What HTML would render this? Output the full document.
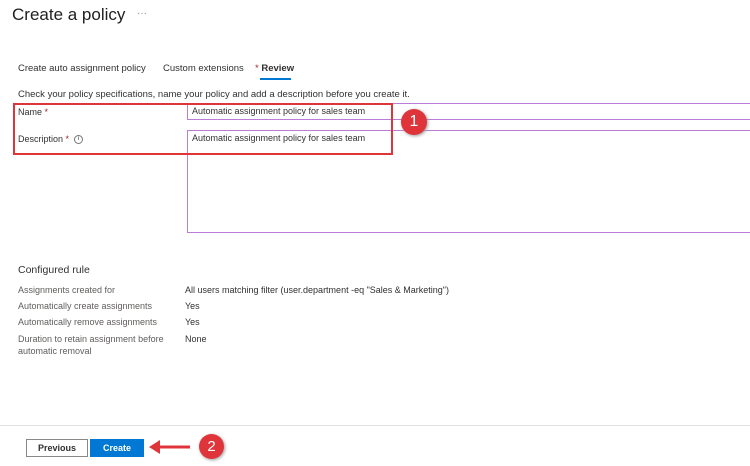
<!DOCTYPE html>
<html><head><style>
body{margin:0;width:750px;height:466px;background:#fff;font-family:"Liberation Sans",sans-serif;color:#323130;position:relative;overflow:hidden}
.a{position:absolute;white-space:nowrap}
.s{font-size:9.5px}
.g{color:#605e5c}
.req{color:#a4262c}
</style></head><body>
<div class="a" style="left:12px;top:5px;font-size:17px;color:#201f1e">Create a policy</div>
<div class="a" style="left:137px;top:8px;font-size:10px;color:#888">···</div>
<div class="a s" style="left:18px;top:63px">Create auto assignment policy</div>
<div class="a s" style="left:163px;top:63px">Custom extensions</div>
<div class="a s" style="left:255px;top:63px"><span class="req">*</span> <b style="font-weight:600">Review</b></div>
<div class="a" style="left:260px;top:78px;width:31px;height:2px;background:#0078d4"></div>
<div class="a s" style="left:18px;top:89px;font-size:9.5px">Check your policy specifications, name your policy and add a description before you create it.</div>
<div class="a" style="left:187px;top:103px;width:570px;height:15px;border:1px solid #b97fd6"></div>
<div class="a s" style="left:192px;top:106px;font-size:9px">Automatic assignment policy for sales team</div>
<div class="a s" style="left:18px;top:107px;font-size:9px">Name <span class="req">*</span></div>
<div class="a" style="left:187px;top:130px;width:570px;height:101px;border:1px solid #b97fd6"></div>
<div class="a s" style="left:192px;top:133px;font-size:9px">Automatic assignment policy for sales team</div>
<div class="a s" style="left:18px;top:134px;font-size:9px">Description <span class="req">*</span> &nbsp;<span style="display:inline-block;width:7px;height:7px;border:1px solid #777;border-radius:50%;font-size:6px;line-height:7px;text-align:center;vertical-align:middle">i</span></div>
<div class="a" style="left:13px;top:103px;width:376px;height:48px;border:2px solid #e0343b"></div>
<div class="a" style="left:401px;top:109px;width:26px;height:26px;border-radius:50%;background:#e0343b;color:#fff;font-size:16px;text-align:center;line-height:26px;box-shadow:1px 1px 3px #999">1</div>
<div class="a" style="left:18px;top:264px;font-size:10.5px">Configured rule</div>
<div class="a s g" style="left:18px;top:285px;font-size:9px">Assignments created for</div>
<div class="a s" style="left:185px;top:285px;font-size:9px">All users matching filter (user.department -eq "Sales &amp; Marketing")</div>
<div class="a s g" style="left:18px;top:301px;font-size:9px">Automatically create assignments</div>
<div class="a s" style="left:185px;top:301px;font-size:9px">Yes</div>
<div class="a s g" style="left:18px;top:317px;font-size:9px">Automatically remove assignments</div>
<div class="a s" style="left:185px;top:317px;font-size:9px">Yes</div>
<div class="a s g" style="left:18px;top:334px;font-size:9px;line-height:11.5px">Duration to retain assignment before<br>automatic removal</div>
<div class="a s" style="left:185px;top:334px;font-size:9px">None</div>
<div class="a" style="left:0;top:425px;width:750px;height:1px;background:#e1dfdd"></div>
<div class="a" style="left:26px;top:439px;width:60px;height:16px;border:1px solid #8a8886;font-size:9px;font-weight:bold;text-align:center;line-height:16px">Previous</div>
<div class="a" style="left:90px;top:439px;width:54px;height:18px;background:#0078d4;color:#fff;font-size:9px;font-weight:bold;text-align:center;line-height:18px">Create</div>
<svg class="a" style="left:146px;top:438px" width="46" height="20"><line x1="44" y1="9" x2="12" y2="9" stroke="#e0343b" stroke-width="3"/><polygon points="3,9 14,2 14,16" fill="#e0343b"/></svg>
<div class="a" style="left:199px;top:434px;width:25px;height:25px;border-radius:50%;background:#e0343b;color:#fff;font-size:15px;text-align:center;line-height:25px;box-shadow:1px 1px 3px #999">2</div>
</body></html>
